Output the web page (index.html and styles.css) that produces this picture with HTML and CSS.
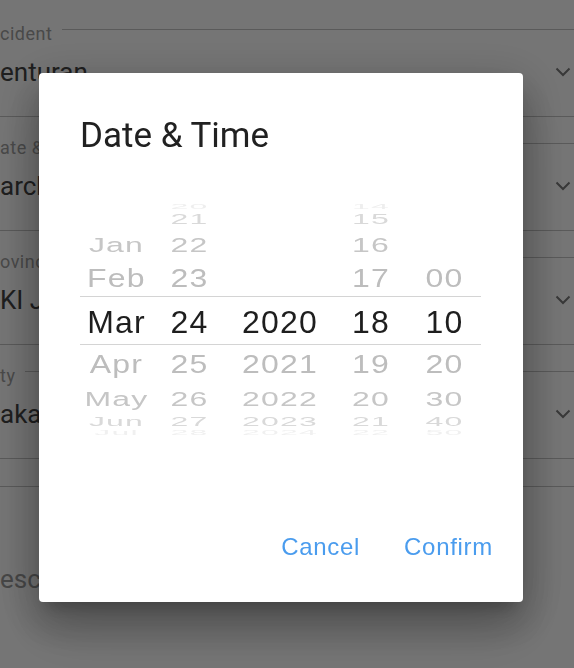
FILE: index.html
```html
<!DOCTYPE html>
<html lang="en">
<head>
<meta charset="utf-8">
<title>Date &amp; Time</title>
<link rel="stylesheet" href="styles.css">
</head>
<body>
<main class="form">
  <fieldset class="field">
    <legend class="label">cident</legend>
    <div class="control"><span class="value">enturan</span><svg class="chev" viewBox="0 0 16 10" width="16" height="10"><path d="M1.5 1.5 L8 8 L14.5 1.5"/></svg></div>
  </fieldset>
  <fieldset class="field">
    <legend class="label">ate &amp;</legend>
    <div class="control"><span class="value">arch</span><svg class="chev" viewBox="0 0 16 10" width="16" height="10"><path d="M1.5 1.5 L8 8 L14.5 1.5"/></svg></div>
  </fieldset>
  <fieldset class="field">
    <legend class="label">ovinc</legend>
    <div class="control"><span class="value">KI Jak</span><svg class="chev" viewBox="0 0 16 10" width="16" height="10"><path d="M1.5 1.5 L8 8 L14.5 1.5"/></svg></div>
  </fieldset>
  <fieldset class="field">
    <legend class="label">ty</legend>
    <div class="control"><span class="value">akarta</span><svg class="chev" viewBox="0 0 16 10" width="16" height="10"><path d="M1.5 1.5 L8 8 L14.5 1.5"/></svg></div>
  </fieldset>
  <fieldset class="field field-area">
    <div class="control"><span class="placeholder">escr</span></div>
  </fieldset>
</main>

<div class="scrim"></div>

<section class="dialog" role="dialog">
  <h2 class="title">Date &amp; Time</h2>
  <div class="wheel">
    <div class="row m4"><span></span><span>20</span><span></span><span>14</span><span></span></div>
    <div class="row m3"><span></span><span>21</span><span></span><span>15</span><span></span></div>
    <div class="row m2"><span>Jan</span><span>22</span><span></span><span>16</span><span></span></div>
    <div class="row m1"><span>Feb</span><span>23</span><span></span><span>17</span><span>00</span></div>
    <div class="row sel"><span>Mar</span><span>24</span><span>2020</span><span>18</span><span>10</span></div>
    <div class="row p1"><span>Apr</span><span>25</span><span>2021</span><span>19</span><span>20</span></div>
    <div class="row p2"><span>May</span><span>26</span><span>2022</span><span>20</span><span>30</span></div>
    <div class="row p3"><span>Jun</span><span>27</span><span>2023</span><span>21</span><span>40</span></div>
    <div class="row p4"><span>Jul</span><span>28</span><span>2024</span><span>22</span><span>50</span></div>
  </div>
  <div class="actions">
    <button class="btn">Cancel</button>
    <button class="btn">Confirm</button>
  </div>
</section>
</body>
</html>
```

FILE: styles.css
```css
html, body {
  margin: 0;
  height: 100%;
}
body {
  background: #ffffff;
  overflow: hidden;
  font-family: Roboto, "Liberation Sans", sans-serif;
}

/* background form (its side borders lie beyond the frame) */
.form {
  padding-top: 15px;
  display: flex;
  flex-direction: column;
  gap: 12px;
}
.field {
  margin: 0;
  min-width: 0;
  border: 1px solid #c4c4c4;
  border-left: 0;
  border-right: 0;
  padding: 13px 3px 29px 0;
}
.label {
  padding: 8px 10px 0 0;
  font-size: 18px;
  line-height: 21px;
  letter-spacing: 0.5px;
  color: #a0a0a0;
}
.control {
  display: flex;
  align-items: center;
  height: 30px;
}
.value {
  flex: 1;
  white-space: nowrap;
  font-size: 26px;
  line-height: 30px;
  color: #444444;
}
.chev {
  flex: none;
  fill: none;
  stroke: #7a7a7a;
  stroke-width: 2;
}
.field-area {
  margin-top: 15px;
  padding-top: 77px;
  padding-bottom: 0;
  border-bottom: 0;
}
.placeholder {
  white-space: nowrap;
  font-size: 26px;
  line-height: 30px;
  color: #9a9a9a;
}

/* scrim + dialog */
.scrim {
  position: fixed;
  inset: 0;
  background: rgba(0, 0, 0, 0.54);
}
.dialog {
  position: fixed;
  left: 39px;
  top: 73px;
  width: 484px;
  box-sizing: border-box;
  padding: 42px 0 33px 41px;
  background: #ffffff;
  border-radius: 4px;
  box-shadow: 0 11px 15px -7px rgba(0, 0, 0, 0.2),
              0 24px 38px 3px rgba(0, 0, 0, 0.16),
              0 9px 46px 8px rgba(0, 0, 0, 0.14),
              0 30px 60px rgba(0, 0, 0, 0.12);
}
.title {
  margin: 0;
  font-family: Roboto, sans-serif;
  font-weight: 400;
  font-size: 35px;
  line-height: 41px;
  color: #212121;
}

/* wheel picker: rows further from the selection are squashed */
.wheel {
  margin-top: 47px;
  width: 401px;
  display: flex;
  flex-direction: column;
  font-family: "Liberation Sans", Arial, sans-serif;
  overflow: hidden;
}
.row {
  --s: 1;
  display: grid;
  grid-template-columns: 73px 73px 108px 74px 73px;
  text-align: center;
  white-space: nowrap;
  font-size: calc(32px * var(--s));
  letter-spacing: calc(1.2px * var(--s));
}
.row span {
  display: block;
  transform: scaleX(calc(1 / var(--s)));
}
.m4 { --s: 0.22; height: 8px;  line-height: 8px;  color: #eeeeee; }
.m3 { --s: 0.45; height: 17px; line-height: 17px; color: #d9d9d9; }
.m2 { --s: 0.64; height: 33px; line-height: 33px; color: #c6c6c6; }
.m1 { --s: 0.82; height: 35px; line-height: 35px; color: #bdbdbd; }
.sel {
  height: 49px;
  box-sizing: border-box;
  padding-top: 4px;
  line-height: 43px;
  border-top: 1px solid #d4d4d4;
  border-bottom: 1px solid #d4d4d4;
  color: #1e1e1e;
}
.p1 { --s: 0.80;  height: 38px; line-height: 38px; color: #bdbdbd; }
.p2 { --s: 0.655; height: 32px; line-height: 32px; color: #c6c6c6; }
.p3 { --s: 0.42;  height: 14px; line-height: 14px; color: #d9d9d9; }
.p4 { --s: 0.2;   height: 8px;  line-height: 8px;  color: #f0f0f0; }

/* actions */
.actions {
  margin-top: 88px;
  display: flex;
  justify-content: flex-end;
  gap: 20px;
  padding-right: 18px;
}
.btn {
  border: 0;
  background: none;
  padding: 8px 12px;
  font-family: "Liberation Sans", Arial, sans-serif;
  font-size: 24px;
  line-height: 28px;
  letter-spacing: 0.7px;
  color: #4a9cee;
  cursor: pointer;
}
```
